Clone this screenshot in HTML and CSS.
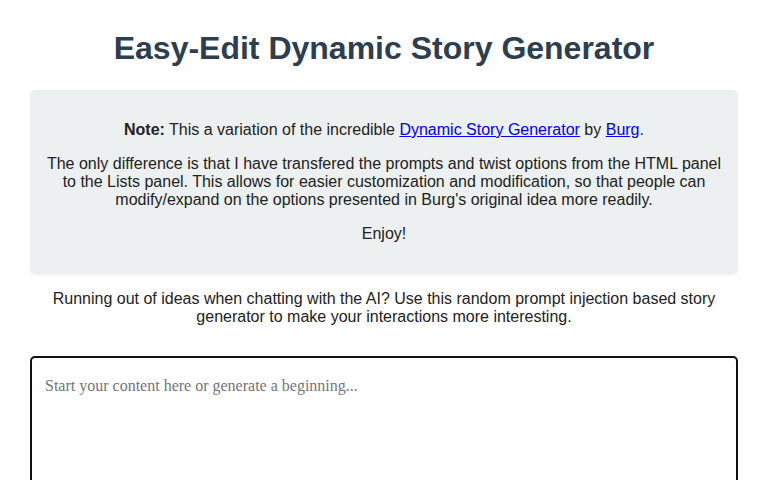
FILE: index.html
```html
<!DOCTYPE html>
<html lang="en">
<head>
<meta charset="utf-8">
<title>Easy-Edit Dynamic Story Generator</title>
<link rel="stylesheet" href="styles.css">
</head>
<body>
<main class="page">
  <h1 class="title">Easy-Edit Dynamic Story Generator</h1>
  <section class="note">
    <p><strong>Note:</strong> This a variation of the incredible <a href="#">Dynamic Story Generator</a> by <a href="#">Burg</a>.</p>
    <p>The only difference is that I have transfered the prompts and twist options from the HTML panel to the Lists panel. This allows for easier customization and modification, so that people can modify/expand on the options presented in Burg's original idea more readily.</p>
    <p>Enjoy!</p>
  </section>
  <p class="intro">Running out of ideas when chatting with the AI? Use this random prompt injection based story generator to make your interactions more interesting.</p>
  <textarea class="story" placeholder="Start your content here or generate a beginning..."></textarea>
</main>
</body>
</html>
```

FILE: styles.css
```css
html, body {
  margin: 0;
  padding: 0;
  background: #ffffff;
}

body {
  font-family: "Liberation Sans", Arial, sans-serif;
  font-size: 16px;
  color: #222222;
}

.page {
  padding: 8px 30px 0;
}

.title {
  font-size: 32px;
  font-weight: bold;
  color: #2c3e50;
  text-align: center;
  margin: 22px 0 23px;
}

.note {
  background: #ecf0f1;
  border-radius: 5px;
  padding: 15px;
  text-align: center;
  box-shadow: 0 1px 3px rgba(0, 0, 0, 0.06);
}

.note p {
  margin: 16px 0;
}

.note a, .note a:visited {
  color: #0000ee;
}

.intro {
  text-align: center;
  margin: 16px 0;
  padding: 0 10px;
}

.story {
  display: block;
  box-sizing: border-box;
  width: 100%;
  height: 220px;
  margin-top: 30px;
  border: 2px solid #111111;
  border-radius: 5px;
  padding: 19px 13px;
  font-family: "Liberation Serif", "Times New Roman", serif;
  font-size: 16px;
  resize: none;
}

.story::placeholder {
  color: #757575;
}
```
